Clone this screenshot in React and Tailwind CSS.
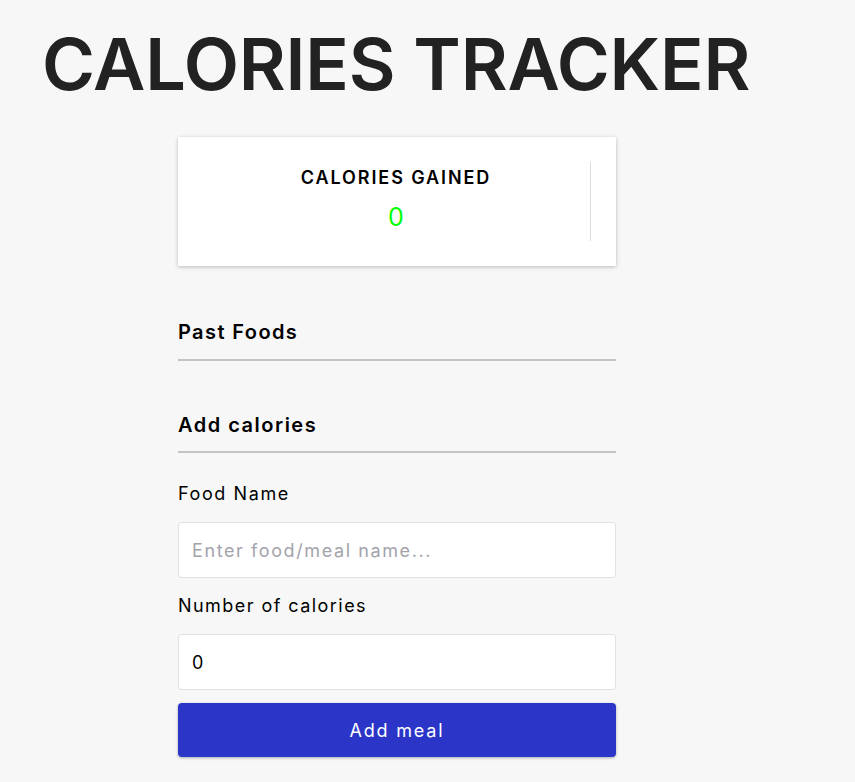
export default function App() {
  const font = { fontFamily: "Inter, 'Noto Sans', sans-serif" };
  return (
    <div className="min-h-[782px] bg-[#f7f7f7] text-black" style={font}>
      <div className="pt-[22px] pl-[42px]">
        <h1 className="text-[72px] leading-[84px] font-semibold tracking-[-0.2px] text-[#222222] whitespace-nowrap">
          CALORIES TRACKER
        </h1>
      </div>
      <div className="ml-[178px] w-[438px] mt-[31px]">
        <div className="bg-white shadow-[0_1px_4px_rgba(0,0,0,0.25)] py-[25px] pl-[24px] pr-[25px]">
          <div className="border-r border-[#dcdcdc] h-[79px] flex flex-col items-center">
            <div className="text-[18px] leading-[30px] font-semibold tracking-[1.9px] mt-[1px]">CALORIES GAINED</div>
            <div className="text-[25px] leading-[32px] text-[#00ff00] mt-[8px]">0</div>
          </div>
        </div>

        <div className="mt-[52px]">
          <h2 className="text-[20px] leading-[28px] font-semibold tracking-[1.4px]">Past Foods</h2>
          <div className="mt-[13px] h-[2px] bg-[#c4c4c4]" />
        </div>

        <div className="mt-[50px]">
          <h2 className="text-[20px] leading-[28px] font-semibold tracking-[1.5px]">Add calories</h2>
          <div className="mt-[12px] h-[2px] bg-[#c4c4c4]" />
        </div>

        <div className="mt-[27px]">
          <label className="block text-[18px] leading-[28px] tracking-[1.6px]">Food Name</label>
          <input
            className="mt-[14px] block w-full h-[56px] bg-white border border-[#e2e2e2] rounded-[3px] px-[13px] text-[18px] tracking-[1.6px] placeholder:text-[#a3a3ab] outline-none"
            placeholder="Enter food/meal name..."
            style={font}
          />
          <label className="block text-[18px] leading-[28px] tracking-[1.45px] mt-[14px]">Number of calories</label>
          <input
            className="mt-[14px] block w-full h-[56px] bg-white border border-[#e2e2e2] rounded-[3px] px-[13px] text-[18px] tracking-[1.5px] outline-none"
            defaultValue="0"
            style={font}
          />
          <button
            className="mt-[13px] block w-full h-[54px] bg-[#2b36c8] text-white text-[18px] tracking-[1.8px] rounded-[4px] shadow-[0_1px_3px_rgba(0,0,0,0.3)]"
            style={font}
          >
            Add meal
          </button>
        </div>
      </div>
    </div>
  );
}
